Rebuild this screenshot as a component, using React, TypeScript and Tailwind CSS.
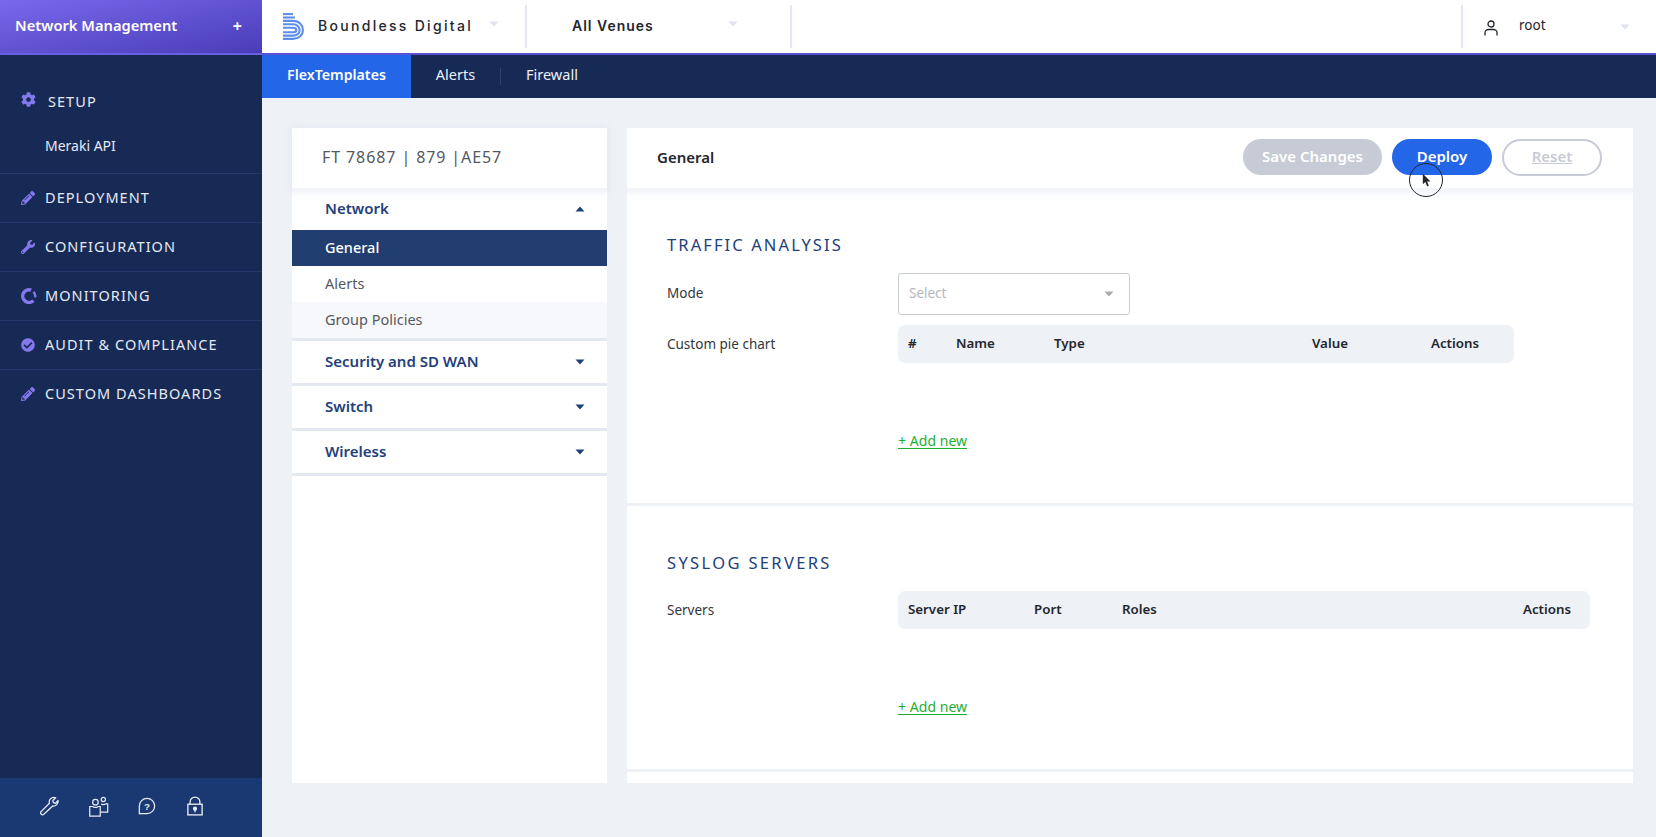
import React from "react";
import { FaCog, FaPencilAlt, FaWrench, FaCheckCircle } from "react-icons/fa";

const F = "font-['Noto_Sans','Open_Sans',sans-serif]";

function Caret({ up, className = "" }: { up?: boolean; className?: string }) {
  return (
    <svg viewBox="0 0 10 6" className={`w-[10px] h-[6px] shrink-0 ${className}`} fill="currentColor">
      <path d={up ? "M5 0.5 L9.5 5.5 H0.5 Z" : "M0.5 0.5 H9.5 L5 5.5 Z"} />
    </svg>
  );
}

function Logo() {
  return (
    <svg viewBox="0 0 21 27" className="w-[21px] h-[27px]" fill="none" stroke="#5b8def" strokeWidth="2.1">
      <path d="M0 1.1 H10" />
      <path d="M0 4.5 H12" />
      <path d="M0 7.9 H10 C16 7.9 19.9 12 19.9 17 C19.9 22 16 25.9 10 25.9 H0" />
      <path d="M0 11.3 H10 C14 11.3 16.6 14 16.6 17 C16.6 20 14 22.6 10 22.6 H0" />
      <path d="M0 14.7 H10 C12 14.7 13.3 15.6 13.3 17 C13.3 18.4 12 19.3 10 19.3 H0" />
    </svg>
  );
}

function NavRow({ icon, label }: { icon: React.ReactNode; label: string }) {
  return (
    <div className="h-[49px] flex items-center pl-[21px] border-t border-[#223a6b]">
      <span className="w-[14px] h-[14px] flex items-center justify-start text-[#8478ee]">{icon}</span>
      <span className="ml-[10px] text-[14.5px] tracking-[1.05px] text-[#e6e9f2]">{label}</span>
    </div>
  );
}

function Monitor() {
  return (
    <svg viewBox="0 0 16 16" className="w-[16px] h-[16px] shrink-0" fill="none" stroke="#8478ee" strokeWidth="3.4">
      <path d="M10.2 2.2 A6.3 6.3 0 1 0 12.4 12.6" />
      <path d="M12.4 3.8 A6.3 6.3 0 0 1 14.2 9.4" strokeWidth="2.4" />
    </svg>
  );
}

function Sidebar() {
  return (
    <aside className="w-[262px] shrink-0 flex flex-col bg-[#172a55]">
      <div className="h-[55px] shrink-0 flex items-center justify-between pl-[15px] pr-[20px] pb-[2px] bg-gradient-to-br from-[#7869ea] to-[#4a3cb9] border-b-2 border-[#6a5fdf]">
        <span className="text-[14.7px] font-semibold text-white">Network Management</span>
        <span className="text-[16px] font-bold text-white leading-none">+</span>
      </div>
      <div className="flex-1 flex flex-col">
        <div className="h-[118px] pt-[36px] flex flex-col">
          <div className="flex items-center pl-[21px] h-[22px]">
            <FaCog size={15} color="#8478ee" className="-mt-[5px] shrink-0" />
            <span className="ml-[12px] text-[14.5px] tracking-[1.05px] text-[#e6e9f2]">SETUP</span>
          </div>
          <div className="pl-[45px] mt-[22px] text-[14px] text-[#e6e9f2] leading-[22px]">Meraki API</div>
        </div>
        <NavRow icon={<FaPencilAlt size={14} />} label="DEPLOYMENT" />
        <NavRow icon={<FaWrench size={14} />} label="CONFIGURATION" />
        <NavRow icon={<Monitor />} label="MONITORING" />
        <NavRow icon={<FaCheckCircle size={14} />} label="AUDIT & COMPLIANCE" />
        <NavRow icon={<FaPencilAlt size={14} />} label="CUSTOM DASHBOARDS" />
      </div>
      <div className="h-[59px] shrink-0 bg-[#1a3871] flex items-center pl-[39px] pb-[3px] gap-[29px] text-[#e9ecf3]">
        <svg viewBox="0 0 22 22" className="w-[20px] h-[20px] shrink-0" fill="none" stroke="currentColor" strokeWidth="1.4" strokeLinejoin="round">
          <path d="M2 17.5 L11.5 8 C10.6 5 12.6 1.8 16 1.6 C17 1.5 18 1.8 18.4 2 L15.2 5 L15.8 7.4 L18.2 8 L21 5 C21.4 8.4 18.6 11.6 15 11 L5 20.4 C3.4 21.4 1 19.4 2 17.5 Z" />
        </svg>
        <svg viewBox="0 0 24 24" className="w-[21px] h-[21px] shrink-0" fill="none" stroke="currentColor" strokeWidth="1.4">
          <circle cx="8.5" cy="7" r="3.2" />
          <circle cx="17.5" cy="4" r="2.4" />
          <path d="M2 12 H5.5 C6 13.4 11 13.4 11.5 12 H14 V23 H2 Z" />
          <path d="M15 9 C16 10 19 10 20 9 H22.5 V18.5 H14.5" />
        </svg>
        <svg viewBox="0 0 20 20" className="w-[18px] h-[18px] shrink-0" fill="none" stroke="currentColor" strokeWidth="1.4">
          <path d="M1.5 18.5 V10 A8.5 8.5 0 1 1 10 18.5 Z" />
          <text x="10" y="14" textAnchor="middle" fontSize="11" fontWeight="700" fill="currentColor" stroke="none" fontFamily="Liberation Sans">?</text>
        </svg>
        <svg viewBox="0 0 18 22" className="ml-[2px] w-[16px] h-[20px] shrink-0" fill="none" stroke="currentColor" strokeWidth="1.5">
          <rect x="1" y="9" width="16" height="12" />
          <path d="M3.5 9 V6.5 A5.5 5.5 0 0 1 14.5 6.5 V9" />
          <circle cx="9" cy="14" r="1.6" fill="currentColor" />
          <path d="M9 15 V18" />
        </svg>
      </div>
    </aside>
  );
}

function TopBar() {
  return (
    <header className="h-[55px] shrink-0 bg-white flex border-b-2 border-[#5b50d4]">
      <div className="w-[263px] flex items-center">
        <div className="ml-[21px]"><Logo /></div>
        <span className="ml-[14px] -mt-[2px] font-['Inter',sans-serif] text-[14px] font-medium tracking-[2.3px] text-[#23262d]">Boundless Digital</span>
        <Caret className="ml-[16px] -mt-[6px] text-[#dfe4ee]" />
      </div>
      <div className="my-[5px] w-[2px] bg-[#e2e7f2]" />
      <div className="w-[263px] flex items-center pl-[45px]">
        <span className="-mt-[2px] font-['Inter',sans-serif] text-[14px] font-semibold tracking-[1px] text-[#23262d]">All Venues</span>
        <Caret className="ml-[74px] -mt-[6px] text-[#dfe4ee]" />
      </div>
      <div className="my-[5px] w-[2px] bg-[#e2e7f2]" />
      <div className="flex-1" />
      <div className="my-[5px] w-[2px] bg-[#e2e7f2]" />
      <div className="w-[193px] flex items-center pl-[21px]">
        <svg viewBox="0 0 14 16" className="w-[14px] h-[16px] mt-[2px]" fill="none" stroke="#23262d" strokeWidth="1.3">
          <circle cx="7" cy="4" r="3" />
          <path d="M1 15.5 V12.5 C1 10.5 3 9.5 4.5 9.5 H9.5 C11 9.5 13 10.5 13 12.5 V15.5" />
        </svg>
        <span className="ml-[21px] text-[13.5px] text-[#23262d] -mt-[2px]">root</span>
        <Caret className="ml-[74px] text-[#dfe4ee]" />
      </div>
    </header>
  );
}

function TabBar() {
  return (
    <nav className="h-[43px] shrink-0 bg-[#172a55] flex items-center text-[14.5px] text-[#eef1f8]">
      <div className="h-full w-[149px] bg-[#2366e8] flex items-center justify-center pb-[3px] text-[14.2px] font-semibold text-white">FlexTemplates</div>
      <div className="w-[89px] text-center pb-[3px]">Alerts</div>
      <div className="w-px h-[17px] bg-[#2d4270]" />
      <div className="pl-[25px] pb-[3px]">Firewall</div>
    </nav>
  );
}

function GroupHead({ label, up }: { label: string; up?: boolean }) {
  return (
    <div className={`flex items-center justify-between pl-[33px] pr-[22px] text-[#22407c] font-semibold text-[15px] ${up ? "h-[38px] pb-[5px]" : "h-[42px]"}`}>
      <span className={up ? "" : "-mt-[2px]"}>{label}</span>
      <Caret up={up} />
    </div>
  );
}

function LeftPanel() {
  return (
    <section className="w-[315px] shrink-0 bg-white flex flex-col">
      <div className="h-[64px] shrink-0 flex items-center pl-[30px] pb-[3px] text-[16px] tracking-[0.9px] text-[#55585f] border-b-4 border-[#f3f4f7] shadow-[0_0_6px_rgba(210,220,235,0.5)]">
        FT 78687 | 879 |AE57
      </div>
      <GroupHead label="Network" up />
      <div className="h-[36px] flex items-center pl-[33px] bg-[#223e70] text-white font-medium text-[14.5px]">General</div>
      <div className="h-[36px] flex items-center pl-[33px] text-[#55585f] text-[14.5px]">Alerts</div>
      <div className="h-[36px] flex items-center pl-[33px] text-[#55585f] text-[14.5px] bg-[#f7f8fc]">Group Policies</div>
      <div className="h-[3px] bg-[#e3e8f1]" />
      <GroupHead label="Security and SD WAN" />
      <div className="h-[3px] bg-[#e3e8f1]" />
      <GroupHead label="Switch" />
      <div className="h-[3px] bg-[#e3e8f1]" />
      <GroupHead label="Wireless" />
      <div className="h-[3px] bg-[#e3e8f1]" />
    </section>
  );
}

function Head({ children }: { children: React.ReactNode }) {
  return <span className="text-[13.3px] font-semibold text-[#23262d]">{children}</span>;
}

function AddNew() {
  return <a className="text-[14px] tracking-[0.05px] text-[#1fae35] underline underline-offset-2">+ Add new</a>;
}

function Title({ children }: { children: React.ReactNode }) {
  return <h2 className="text-[16.5px] tracking-[2.1px] text-[#22407c] leading-[24px]">{children}</h2>;
}

function RightPanel() {
  return (
    <section className="flex-1 bg-white flex flex-col overflow-hidden">
      <div className="h-[64px] shrink-0 flex items-center justify-between pl-[30px] pr-[31px] pb-[2px] border-b-4 border-[#f3f4f7] shadow-[0_0_6px_rgba(210,220,235,0.5)]">
        <span className="text-[15px] font-semibold text-[#23262d]">General</span>
        <div className="flex items-center">
          <button className="w-[139px] h-[36px] pb-[2px] rounded-full bg-[#c7cbd5] text-white font-semibold text-[15px]">Save Changes</button>
          <button className="ml-[10px] w-[100px] h-[36px] pb-[2px] rounded-full bg-[#2366e8] text-white font-semibold text-[15px]">Deploy</button>
          <button className="ml-[10px] w-[100px] h-[37px] pb-[2px] rounded-full border-2 border-[#c7cbd5] text-[#c7cbd5] font-semibold text-[15px] underline">Reset</button>
        </div>
      </div>
      <div className="h-[314px] shrink-0 border-b-[3px] border-[#eef1f6] pl-[40px] pt-[41px]">
        <Title>TRAFFIC ANALYSIS</Title>
        <div className="flex mt-[16px]">
          <div className="w-[231px] text-[13.5px] text-[#33363c] leading-[20px] pt-[10px]">Mode</div>
          <div className="w-[232px] h-[42px] border border-[#c7cbd5] rounded-[3px] flex items-center justify-between pl-[10px] pr-[15px] text-[13.5px] text-[#b5b7bc]">
            <span className="-mt-[2px]">Select</span> <Caret className="text-[#a9abb1] w-[8px]" />
          </div>
        </div>
        <div className="flex mt-[10px]">
          <div className="w-[231px] text-[13.5px] text-[#33363c] leading-[20px] pt-[9px]">Custom pie chart</div>
          <div className="w-[616px] h-[38px] rounded-[7px] bg-[#eef1f6] grid grid-cols-[48px_98px_258px_119px_1fr] items-center pl-[10px]">
            <Head>#</Head><Head>Name</Head><Head>Type</Head><Head>Value</Head><Head>Actions</Head>
          </div>
        </div>
        <div className="ml-[231px] mt-[66px] leading-[22px]"><AddNew /></div>
      </div>
      <div className="h-[266px] shrink-0 border-b-[3px] border-[#eef1f6] pl-[40px] pt-[45px]">
        <h2 className="text-[16.5px] tracking-[2.35px] text-[#22407c] leading-[24px]">SYSLOG SERVERS</h2>
        <div className="flex mt-[16px]">
          <div className="w-[231px] text-[13.5px] text-[#33363c] leading-[20px] pt-[9px]">Servers</div>
          <div className="w-[692px] h-[38px] rounded-[7px] bg-[#eef1f6] grid grid-cols-[126px_88px_401px_1fr] items-center pl-[10px]">
            <Head>Server IP</Head><Head>Port</Head><Head>Roles</Head><Head>Actions</Head>
          </div>
        </div>
        <div className="ml-[231px] mt-[66px] leading-[22px]"><AddNew /></div>
      </div>
    </section>
  );
}

function Cursor() {
  return (
    <div className="absolute left-[1409px] top-[163px] w-[34px] h-[34px] rounded-full border border-[#23262d] flex items-center justify-center">
      <svg viewBox="0 0 12 17" className="w-[10px] h-[15px] ml-[1px]" fill="#23262d">
        <path d="M1 0.5 V13 L4 10.4 L6.2 15.6 L8.2 14.6 L6 9.6 H10.2 Z" />
      </svg>
    </div>
  );
}

export default function App() {
  return (
    <div className={`h-screen w-full flex overflow-hidden relative bg-[#eef1f6] ${F}`}>
      <Sidebar />
      <div className="flex-1 flex flex-col min-w-0">
        <TopBar />
        <TabBar />
        <main className="flex-1 flex min-h-0 gap-[20px] pl-[30px] pr-[23px] pt-[30px] pb-[54px]">
          <LeftPanel />
          <RightPanel />
        </main>
      </div>
      <Cursor />
    </div>
  );
}
